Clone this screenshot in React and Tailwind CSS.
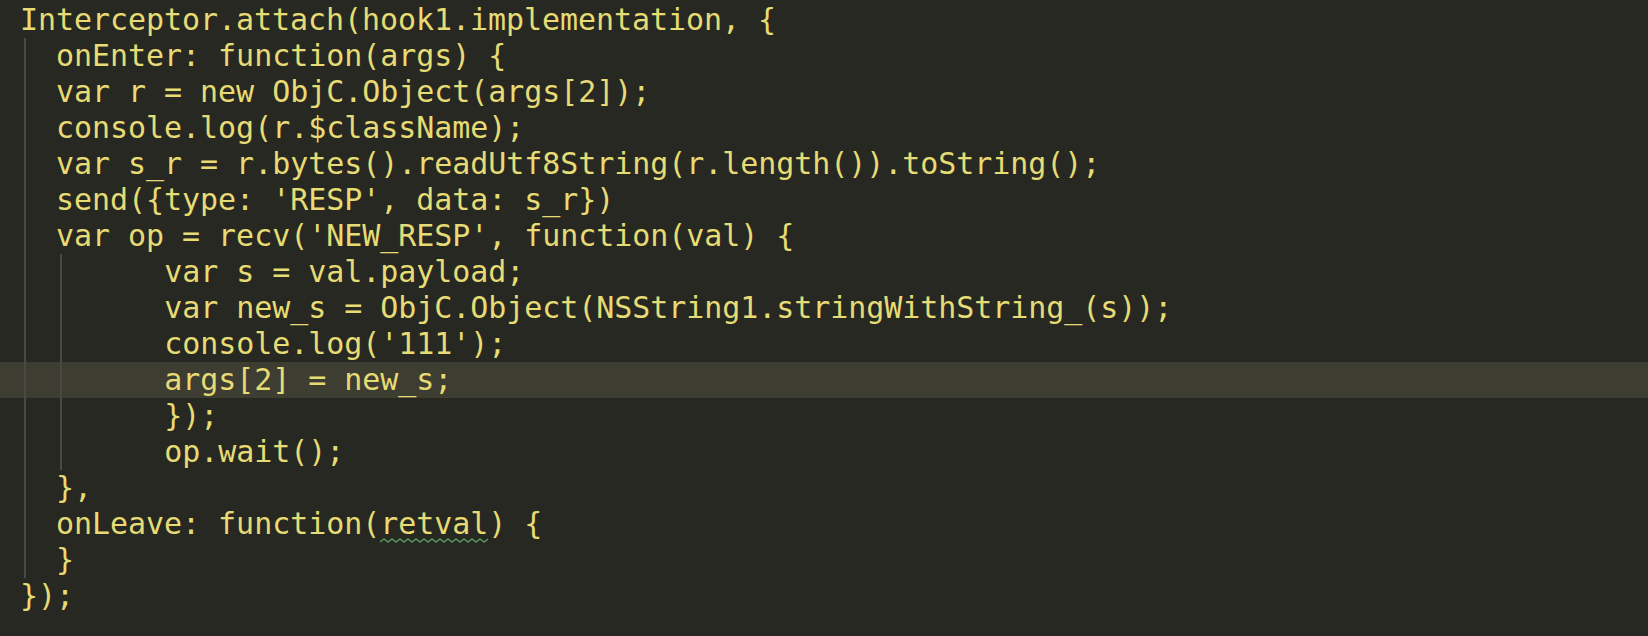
const lines = [
  { text: "Interceptor.attach(hook1.implementation, {", guides: 0 },
  { text: "onEnter: function(args) {", guides: 1 },
  { text: "var r = new ObjC.Object(args[2]);", guides: 1 },
  { text: "console.log(r.$className);", guides: 1 },
  { text: "var s_r = r.bytes().readUtf8String(r.length()).toString();", guides: 1 },
  { text: "send({type: 'RESP', data: s_r})", guides: 1 },
  { text: "var op = recv('NEW_RESP', function(val) {", guides: 1 },
  { text: "    var s = val.payload;", guides: 2 },
  { text: "    var new_s = ObjC.Object(NSString1.stringWithString_(s));", guides: 2 },
  { text: "    console.log('111');", guides: 2 },
  { text: "    args[2] = new_s;", guides: 2, active: true },
  { text: "    });", guides: 2 },
  { text: "    op.wait();", guides: 2 },
  { text: "},", guides: 1 },
  { text: "onLeave: function(", after: ") {", squiggle: "retval", guides: 1 },
  { text: "}", guides: 1 },
  { text: "});", guides: 0 },
];

// wavy lint underline under a word
function Squiggle() {
  const pts = [];
  for (let x = 0, i = 0; x <= 108; x += 4, i++) {
    pts.push(`${x},${i % 2 ? 1 : 4}`);
  }
  return (
    <svg className="absolute left-0 top-[32px]" width="108" height="5" viewBox="0 0 108 5">
      <polyline points={pts.join(" ")} fill="none" stroke="#56955e" strokeWidth="1.5" />
    </svg>
  );
}

function Guide() {
  return (
    <span className="inline-flex w-[2ch] h-[36px] align-top">
      <span className="ml-[4px] w-[2px] h-full bg-[#4a4a44]" />
    </span>
  );
}

function Line({ line }) {
  return (
    <div
      className={
        "h-[36px] pl-[20px] whitespace-pre " +
        (line.active ? "bg-[#3e3d32]" : "")
      }
    >
      {Array.from({ length: line.guides }).map((_, i) => (
        <Guide key={i} />
      ))}
      <span>{line.text}</span>
      {line.squiggle && (
        <>
          <span className="relative inline-block">
            {line.squiggle}
            <Squiggle />
          </span>
          <span>{line.after}</span>
        </>
      )}
    </div>
  );
}

export default function App() {
  return (
    <div
      className="w-[1648px] h-[636px] overflow-hidden bg-[#272822] pt-[2px] text-[#e6db74] text-[30px] leading-[36px] tracking-[-0.06px]"
      style={{ fontFamily: '"DejaVu Sans Mono", monospace' }}
    >
      {lines.map((line, i) => (
        <Line key={i} line={line} />
      ))}
    </div>
  );
}
